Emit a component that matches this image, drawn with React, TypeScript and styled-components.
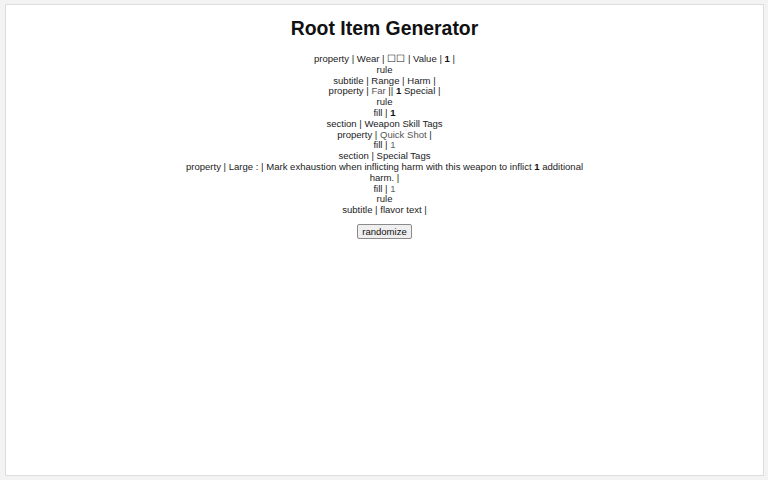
import styled, { createGlobalStyle } from "styled-components";

const Global = createGlobalStyle`
  html, body {
    margin: 0;
    padding: 0;
    background: #f3f3f3;
    font-family: "Liberation Sans", Arial, sans-serif;
  }
`;

const Card = styled.div`
  margin: 4px 4px 0 5px;
  height: 470px;
  background: #fff;
  border: 1px solid #dcdcdc;
  display: flex;
  flex-direction: column;
  align-items: center;
`;

const Title = styled.h1`
  font-size: 19.4px;
  font-weight: bold;
  color: #111;
  margin: 12px 0 14px;
`;

const Output = styled.div`
  font-size: 9.55px;
  line-height: 10.8px;
  color: #222;
  text-align: center;
  width: 420px;
`;

const Line = styled.div``;

const Value = styled.span<{ soft?: boolean }>`
  color: ${({ soft }) => (soft ? "#555" : "#222")};
`;

const Num = styled.span<{ heavy?: boolean }>`
  font-weight: ${({ heavy }) => (heavy ? "bold" : "normal")};
  color: ${({ heavy }) => (heavy ? "#111" : "#666")};
`;

const Randomize = styled.button`
  margin-top: 8px;
  font-family: "Liberation Sans", Arial, sans-serif;
  font-size: 9.55px;
  padding: 1px 4px;
  background: #efefef;
  border: 1px solid #8a8a8a;
  border-radius: 2px;
  color: #111;
`;

export default function App() {
  return (
    <>
      <Global />
      <Card>
        <Title>Root Item Generator</Title>
        <Output>
          <Line>
            property | Wear | ☐☐ | Value | <Num heavy>1</Num> |
          </Line>
          <Line>rule</Line>
          <Line>subtitle | Range | Harm |</Line>
          <Line>
            property | <Value soft>Far</Value> || <Num heavy>1</Num> Special |
          </Line>
          <Line>rule</Line>
          <Line>
            fill | <Num heavy>1</Num>
          </Line>
          <Line>section | Weapon Skill Tags</Line>
          <Line>
            property | <Value soft>Quick Shot</Value> |
          </Line>
          <Line>
            fill | <Num>1</Num>
          </Line>
          <Line>section | Special Tags</Line>
          <Line>
            property | Large : | Mark exhaustion when inflicting harm with this
            weapon to inflict <Num heavy>1</Num> additional harm. |
          </Line>
          <Line>
            fill | <Num>1</Num>
          </Line>
          <Line>rule</Line>
          <Line>subtitle | flavor text |</Line>
        </Output>
        <Randomize>randomize</Randomize>
      </Card>
    </>
  );
}
